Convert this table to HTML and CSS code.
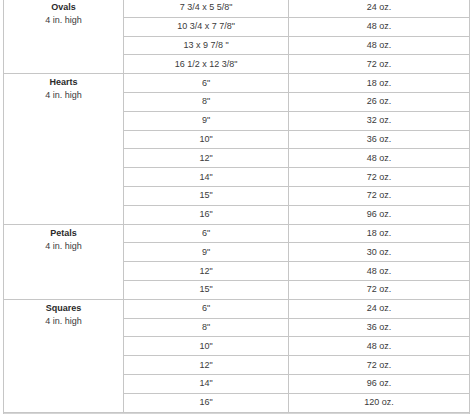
FILE: index.html
```html
<!DOCTYPE html>
<html>
<head>
<meta charset="utf-8">
<link rel="stylesheet" href="styles.css">
</head>
<body>
<table class="sizes">
  <colgroup>
    <col class="c1"><col class="c2"><col class="c3">
  </colgroup>
  <tbody>
    <tr><td class="shape" rowspan="4"><b>Ovals</b><br>4 in. high</td><td>7 3/4 x 5 5/8"</td><td>24 oz.</td></tr>
    <tr><td>10 3/4 x 7 7/8"</td><td>48 oz.</td></tr>
    <tr><td>13 x 9 7/8 "</td><td>48 oz.</td></tr>
    <tr><td>16 1/2 x 12 3/8"</td><td>72 oz.</td></tr>

    <tr><td class="shape" rowspan="8"><b>Hearts</b><br>4 in. high</td><td>6"</td><td>18 oz.</td></tr>
    <tr><td>8"</td><td>26 oz.</td></tr>
    <tr><td>9"</td><td>32 oz.</td></tr>
    <tr><td>10"</td><td>36 oz.</td></tr>
    <tr><td>12"</td><td>48 oz.</td></tr>
    <tr><td>14"</td><td>72 oz.</td></tr>
    <tr><td>15"</td><td>72 oz.</td></tr>
    <tr><td>16"</td><td>96 oz.</td></tr>

    <tr><td class="shape" rowspan="4"><b>Petals</b><br>4 in. high</td><td>6"</td><td>18 oz.</td></tr>
    <tr><td>9"</td><td>30 oz.</td></tr>
    <tr><td>12"</td><td>48 oz.</td></tr>
    <tr><td>15"</td><td>72 oz.</td></tr>

    <tr><td class="shape" rowspan="6"><b>Squares</b><br>4 in. high</td><td>6"</td><td>24 oz.</td></tr>
    <tr><td>8"</td><td>36 oz.</td></tr>
    <tr><td>10"</td><td>48 oz.</td></tr>
    <tr><td>12"</td><td>72 oz.</td></tr>
    <tr><td>14"</td><td>96 oz.</td></tr>
    <tr><td>16"</td><td>120 oz.</td></tr>
  </tbody>
  <tfoot>
    <tr class="foot"><td colspan="3"></td></tr>
  </tfoot>
</table>
</body>
</html>
```
FILE: styles.css
```css
html, body {
  margin: 0;
  padding: 0;
  background: #fff;
}
body {
  padding-left: 3px;
  overflow: hidden;
}
.sizes {
  margin-top: -2px;
  border-collapse: collapse;
  table-layout: fixed;
  width: 466px;
  font-family: "Liberation Sans", Arial, sans-serif;
  font-size: 9px;
  color: #3a3a3a;
}
.c1 { width: 120px; }
.c2 { width: 165px; }
.c3 { width: 181px; }
.sizes td {
  border: 1px solid #c6c6c6;
  height: 18.8px;
  padding: 0;
  text-align: center;
  vertical-align: middle;
  box-sizing: border-box;
  line-height: 13px;
}
.sizes td.shape {
  vertical-align: top;
  padding-top: 2px;
}
.sizes td.shape b {
  color: #2a2a2a;
}
.foot td {
  background: #d4d4d4;
  height: 8px;
}
```
